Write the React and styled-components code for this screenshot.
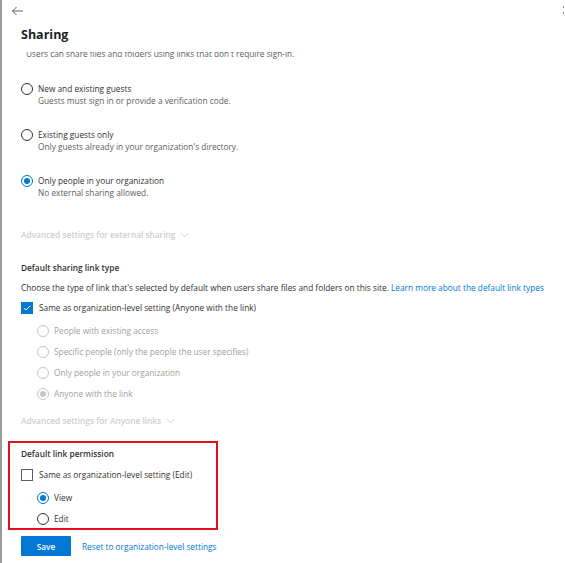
import React from "react";
import styled, { createGlobalStyle } from "styled-components";

const Global = createGlobalStyle`
  html, body { margin: 0; padding: 0; background: #fff; }
  body { font-family: "Open Sans", "Noto Sans", sans-serif; color: #323130; }
`;

const Page = styled.div`
  width: 565px;
  height: 563px;
  box-sizing: border-box;
  border-left: 2px solid #9a9a9a;
  display: flex;
  flex-direction: column;
  overflow: hidden;
  position: relative;
`;

const Header = styled.div`
  background: #fff;
  padding: 4px 0 0 19px;
  height: 52px;
  box-sizing: border-box;
  flex-shrink: 0;
`;

const BackButton = styled.div`
  width: 16px;
  height: 14px;
  margin-left: -12px;
  display: flex;
  align-items: center;
  justify-content: center;
  color: #605e5c;
`;

const Title = styled.h1`
  margin: 9px 0 0;
  font-size: 12.5px;
  font-weight: 700;
  line-height: 16px;
  color: #201f1e;
`;

const Body = styled.div`
  flex: 1;
  padding: 0 0 0 19px;
  display: flex;
  flex-direction: column;
`;

const ClipBox = styled.div`
  height: 8px;
  overflow: hidden;
  padding-left: 5px;
`;

const ClippedText = styled.div`
  margin-top: -4px;
  font-size: 8.3px;
  line-height: 12px;
  color: #605e5c;
  white-space: nowrap;
`;

const OptionGroup = styled.div`
  display: flex;
  flex-direction: column;
  gap: ${(p) => p.$gap || 0}px;
  margin-top: ${(p) => p.$top || 0}px;
  padding-left: ${(p) => p.$indent || 0}px;
`;

const OptionRow = styled.div`
  display: flex;
  align-items: flex-start;
  gap: 5px;
`;

const Radio = styled.span`
  width: 12px;
  height: 12px;
  box-sizing: border-box;
  border-radius: 50%;
  border: 1px solid ${(p) => (p.$disabled ? "#c8c6c4" : p.$checked ? "#0078d4" : "#323130")};
  display: flex;
  align-items: center;
  justify-content: center;
  flex-shrink: 0;
  &::after {
    content: "";
    width: 6px;
    height: 6px;
    border-radius: 50%;
    background: ${(p) => (p.$disabled ? "#c8c6c4" : "#0078d4")};
    display: ${(p) => (p.$checked ? "block" : "none")};
  }
`;

const OptionText = styled.div`
  display: flex;
  flex-direction: column;
  font-size: 8.3px;
  line-height: 12px;
  color: ${(p) => (p.$disabled ? "#a19f9d" : "#323130")};
`;

const Desc = styled.span`
  color: #605e5c;
`;

const Advanced = styled.div`
  margin-top: ${(p) => p.$top}px;
  font-size: 8.3px;
  line-height: 12px;
  color: #d0cecc;
  font-weight: 600;
  display: flex;
  align-items: center;
  gap: 5px;
`;

const SectionTitle = styled.div`
  margin-top: ${(p) => p.$top}px;
  font-size: 8.3px;
  line-height: 12px;
  font-weight: 600;
  color: #323130;
`;

const Paragraph = styled.div`
  margin-top: 8px;
  font-size: 8.3px;
  line-height: 12px;
  color: #323130;
  white-space: nowrap;
`;

const Link = styled.a`
  color: #0078d4;
  text-decoration: none;
  font-size: 8.3px;
`;

const CheckRow = styled.div`
  margin-top: ${(p) => p.$top}px;
  display: flex;
  align-items: center;
  gap: 6px;
  font-size: 8.3px;
  line-height: 12px;
  color: #323130;
`;

const Checkbox = styled.span`
  width: 12px;
  height: 12px;
  box-sizing: border-box;
  border: 1px solid ${(p) => (p.$checked ? "#0078d4" : "#605e5c")};
  background: ${(p) => (p.$checked ? "#0078d4" : "#fff")};
  display: flex;
  align-items: center;
  justify-content: center;
  flex-shrink: 0;
`;

const Highlight = styled.div`
  margin: 14px 0 0 -13px;
  width: 210px;
  height: 89px;
  box-sizing: border-box;
  border: 2px solid #e3101b;
  padding: 5px 0 0 11px;
`;

const Footer = styled.div`
  margin-top: 6px;
  display: flex;
  align-items: center;
  gap: 11px;
`;

const PrimaryButton = styled.button`
  width: 50px;
  height: 20px;
  border: none;
  border-radius: 1px;
  background: #0078d4;
  color: #fff;
  font-family: inherit;
  font-size: 8.3px;
  font-weight: 600;
  padding: 0;
`;

const ScrollMarks = styled.div`
  position: absolute;
  right: 1px;
  top: 6px;
  display: flex;
  flex-direction: column;
  gap: 4px;
  & > span {
    width: 1px;
    height: 2px;
    background: #8a8886;
  }
`;

const Chevron = () => (
  <svg width="9" height="6" viewBox="0 0 9 6">
    <path d="M0.5 0.8 L4.5 4.8 L8.5 0.8" fill="none" stroke="#d0cecc" strokeWidth="0.9" />
  </svg>
);

const Option = ({ label, desc, checked, disabled }) => (
  <OptionRow>
    <Radio $checked={checked} $disabled={disabled} />
    <OptionText $disabled={disabled}>
      <span>{label}</span>
      {desc && <Desc>{desc}</Desc>}
    </OptionText>
  </OptionRow>
);

export default function App() {
  return (
    <>
      <Global />
      <Page>
        <ScrollMarks>
          <span />
          <span />
        </ScrollMarks>
        <Header>
          <BackButton>
            <svg width="13" height="10" viewBox="0 0 13 10">
              <path d="M12 5 H1.5 M5.5 1 L1.5 5 L5.5 9" fill="none" stroke="#605e5c" strokeWidth="1" />
            </svg>
          </BackButton>
          <Title>Sharing</Title>
        </Header>
        <Body>
          <ClipBox>
            <ClippedText>Users can share files and folders using links that don't require sign-in.</ClippedText>
          </ClipBox>
          <OptionGroup $top={23} $gap={22}>
            <Option label="New and existing guests" desc="Guests must sign in or provide a verification code." />
            <Option label="Existing guests only" desc="Only guests already in your organization's directory." />
            <Option label="Only people in your organization" desc="No external sharing allowed." checked />
          </OptionGroup>
          <Advanced $top={30}>
            Advanced settings for external sharing <Chevron />
          </Advanced>
          <SectionTitle $top={21}>Default sharing link type</SectionTitle>
          <Paragraph>
            Choose the type of link that's selected by default when users share files and folders on this site.{" "}
            <Link href="#">Learn more about the default link types</Link>
          </Paragraph>
          <CheckRow $top={8}>
            <Checkbox $checked>
              <svg width="8" height="6" viewBox="0 0 8 6">
                <path d="M0.8 3 L3 5 L7.2 0.8" fill="none" stroke="#fff" strokeWidth="1" />
              </svg>
            </Checkbox>
            Same as organization-level setting (Anyone with the link)
          </CheckRow>
          <OptionGroup $top={11} $gap={9} $indent={16}>
            <Option label="People with existing access" disabled />
            <Option label="Specific people (only the people the user specifies)" disabled />
            <Option label="Only people in your organization" disabled />
            <Option label="Anyone with the link" disabled checked />
          </OptionGroup>
          <Advanced $top={15}>
            Advanced settings for Anyone links <Chevron />
          </Advanced>
          <Highlight>
            <SectionTitle $top={0}>Default link permission</SectionTitle>
            <CheckRow $top={9}>
              <Checkbox />
              Same as organization-level setting (Edit)
            </CheckRow>
            <OptionGroup $top={11} $gap={9} $indent={16}>
              <Option label="View" checked />
              <Option label="Edit" />
            </OptionGroup>
          </Highlight>
          <Footer>
            <PrimaryButton>Save</PrimaryButton>
            <Link href="#">Reset to organization-level settings</Link>
          </Footer>
        </Body>
      </Page>
    </>
  );
}
